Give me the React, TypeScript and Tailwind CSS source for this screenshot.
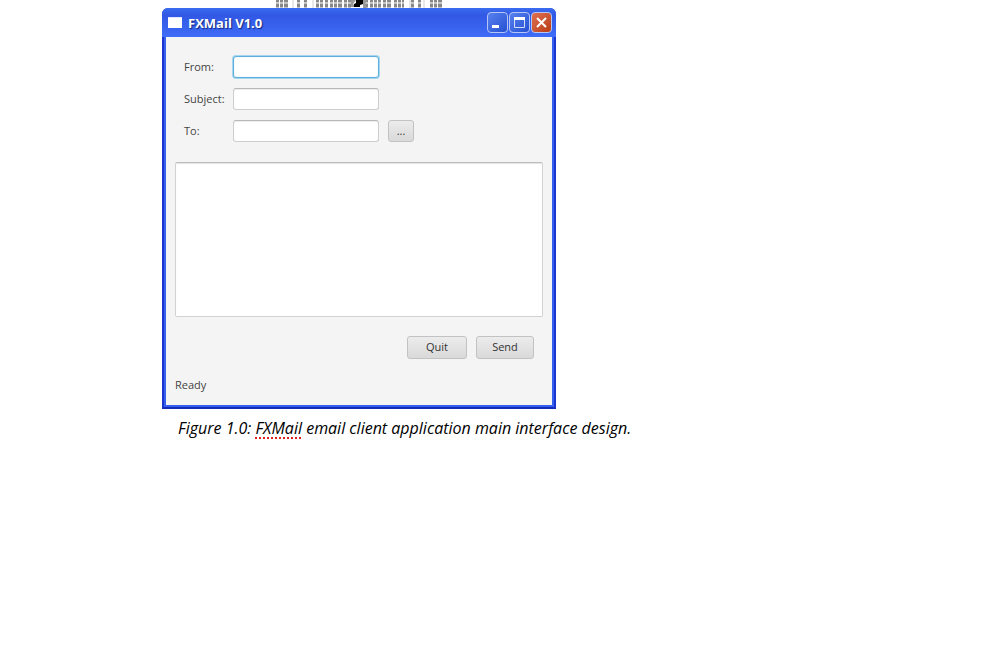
import React, { useState } from 'react';

const field = 'h-[22px] w-[146px] rounded-[3px] border bg-white px-2 text-[11px] text-[#333] outline-none';
const fieldIdle = 'border-[#cdcdcd] border-t-[#b8b8b8] shadow-[inset_0_1px_1px_#ececec]';
const fieldActive = 'border-[#5eaede] shadow-[0_0_0_1px_#a5d6ee,inset_0_0_1px_#8ecdec]';
const button = 'flex items-center justify-center rounded-[3px] border border-[#c2c2c2] bg-linear-to-b from-[#ececec] to-[#d9d9d9] text-[11px] text-[#333]';
const caption = 'flex size-[21px] items-center justify-center rounded-[4px] border border-[#b5c6f5]';

const rows = [
  { id: 'from', label: 'From:' },
  { id: 'subject', label: 'Subject:' },
  { id: 'to', label: 'To:' },
];

// x, width of the columns in the strip above the window
const strip = [
  [0, 3], [4, 3], [8, 4], [21, 3], [28, 3], [40, 3], [44, 3], [49, 3], [54, 3], [58, 3], [62, 4], [68, 3],
  [72, 3], [89, 3], [94, 3], [98, 3], [102, 3], [107, 3], [111, 4], [118, 3], [122, 3], [126, 2], [135, 3],
  [142, 3], [154, 3], [158, 3], [162, 4],
];

const BarStrip = () => (
  <svg className="ml-[114px] block h-2 w-[166px]" viewBox="0 0 166 8" aria-hidden="true">
    {strip.map(([x, w]) => (
      <g key={x}>
        <rect x={x} width={w} height="8" fill="#c4c4c4" />
        <rect x={x} width={w} height="2" fill="#888" />
        <rect x={x} y="4" width={w} height="3" fill="#888" />
      </g>
    ))}
    <path d="M17 0v8M37 0v8M134 0v8M148 0v8" stroke="#d0d0d0" />
    <path d="M75 0h5l-3 4 3 3h-5zM87 0h4l-2 4 2 4h-4z" fill="#999" />
    <path d="M80 0h7v4l-3 1v2h-6V4l2-1z" fill="#000" />
  </svg>
);

const TitleBar = () => (
  <div className="flex h-[29px] items-center rounded-t-[6px] bg-linear-to-b from-[#3a6cf0] via-[#3158e4] via-25% to-[#3f6cf8] pr-1 pl-[6px]">
    <div className="h-[11px] w-[14px] border-t border-[#dce4ff] bg-white" />
    <h1 className="ml-[6px] flex-1 font-['Open_Sans',sans-serif] text-[13px] leading-[16px] font-bold text-white [text-shadow:1px_1px_1px_#10267e]">
      FXMail V1.0
    </h1>
    <div className="flex gap-px">
      <button aria-label="Minimize" className={`${caption} bg-linear-to-br from-[#5880ee] to-[#2450d2]`}>
        <svg className="size-[19px]" viewBox="0 0 19 19"><path d="M4 12h7v3H4z" fill="#fff" /></svg>
      </button>
      <button aria-label="Maximize" className={`${caption} bg-linear-to-br from-[#5880ee] to-[#2450d2]`}>
        <svg className="size-[19px]" viewBox="0 0 19 19">
          <path d="M4.5 4.5h10v10h-10z" fill="none" stroke="#d3dcfa" />
          <path d="M4 4h11v3H4z" fill="#fff" />
        </svg>
      </button>
      <button aria-label="Close" className={`${caption} bg-linear-to-br from-[#df7050] to-[#b93c12]`}>
        <svg className="size-[19px]" viewBox="0 0 19 19"><path d="M5 5l9 9M14 5l-9 9" stroke="#fff" strokeWidth="2" /></svg>
      </button>
    </div>
  </div>
);

const App = () => {
  const [active, setActive] = useState('from');

  return (
    <main className="min-h-screen bg-white pl-[162px] font-['Open_Sans',sans-serif]">
      <BarStrip />

      <section className="w-full max-w-[394px] rounded-t-[6px] bg-[#1c3fd8]">
        <TitleBar />
        <div className="border-x-2 border-b-2 border-[#1c35d0] border-b-[#142bb8]">
          <div className="border-x-2 border-b-2 border-[#3560ee] bg-[#f4f4f4] pt-[19px]">

            {/* Message header */}
            <div className="grid grid-cols-[49px_1fr] gap-y-[10px] pl-[18px]">
              {rows.map(r => (
                <React.Fragment key={r.id}>
                  <label htmlFor={r.id} className="self-center text-[11px] leading-[16px] text-[#444]">{r.label}</label>
                  <div className="flex gap-[9px]">
                    <input
                      id={r.id}
                      type="text"
                      onFocus={() => setActive(r.id)}
                      className={`${field} ${active === r.id ? fieldActive : fieldIdle}`}
                    />
                    {r.id === 'to' && <button aria-label="Browse contacts" className={`${button} h-[22px] w-[26px]`}>...</button>}
                  </div>
                </React.Fragment>
              ))}
            </div>

            {/* Body */}
            <div className="mt-[20px] flex px-[9px]">
              <textarea
                aria-label="Message"
                onFocus={() => setActive('body')}
                className="h-[155px] w-full resize-none rounded-[2px] border border-[#d2d2d2] border-t-[#bcbcbc] bg-white p-2 text-[11px] shadow-[inset_0_1px_1px_#e4e4e4] outline-none"
              />
            </div>

            <div className="mt-[19px] flex justify-end gap-[9px] pr-[18px]">
              <button className={`${button} h-[23px] w-[60px]`}>Quit</button>
              <button className={`${button} h-[23px] w-[58px]`}>Send</button>
            </div>

            <p className="mt-[18px] pb-[12px] pl-[9px] text-[11px] leading-[16px] text-[#444]">Ready</p>
          </div>
        </div>
      </section>

      <p className="mt-2 pl-4 font-['Segoe_Print','Open_Sans',sans-serif] text-[16px] leading-[22px] text-black italic">
        Figure 1.0:{' '}
        <span className="underline decoration-[#e02020] decoration-dotted decoration-2 underline-offset-3">FXMail</span>
        {' '}email client application main interface design.
      </p>
    </main>
  );
};

export default App;
